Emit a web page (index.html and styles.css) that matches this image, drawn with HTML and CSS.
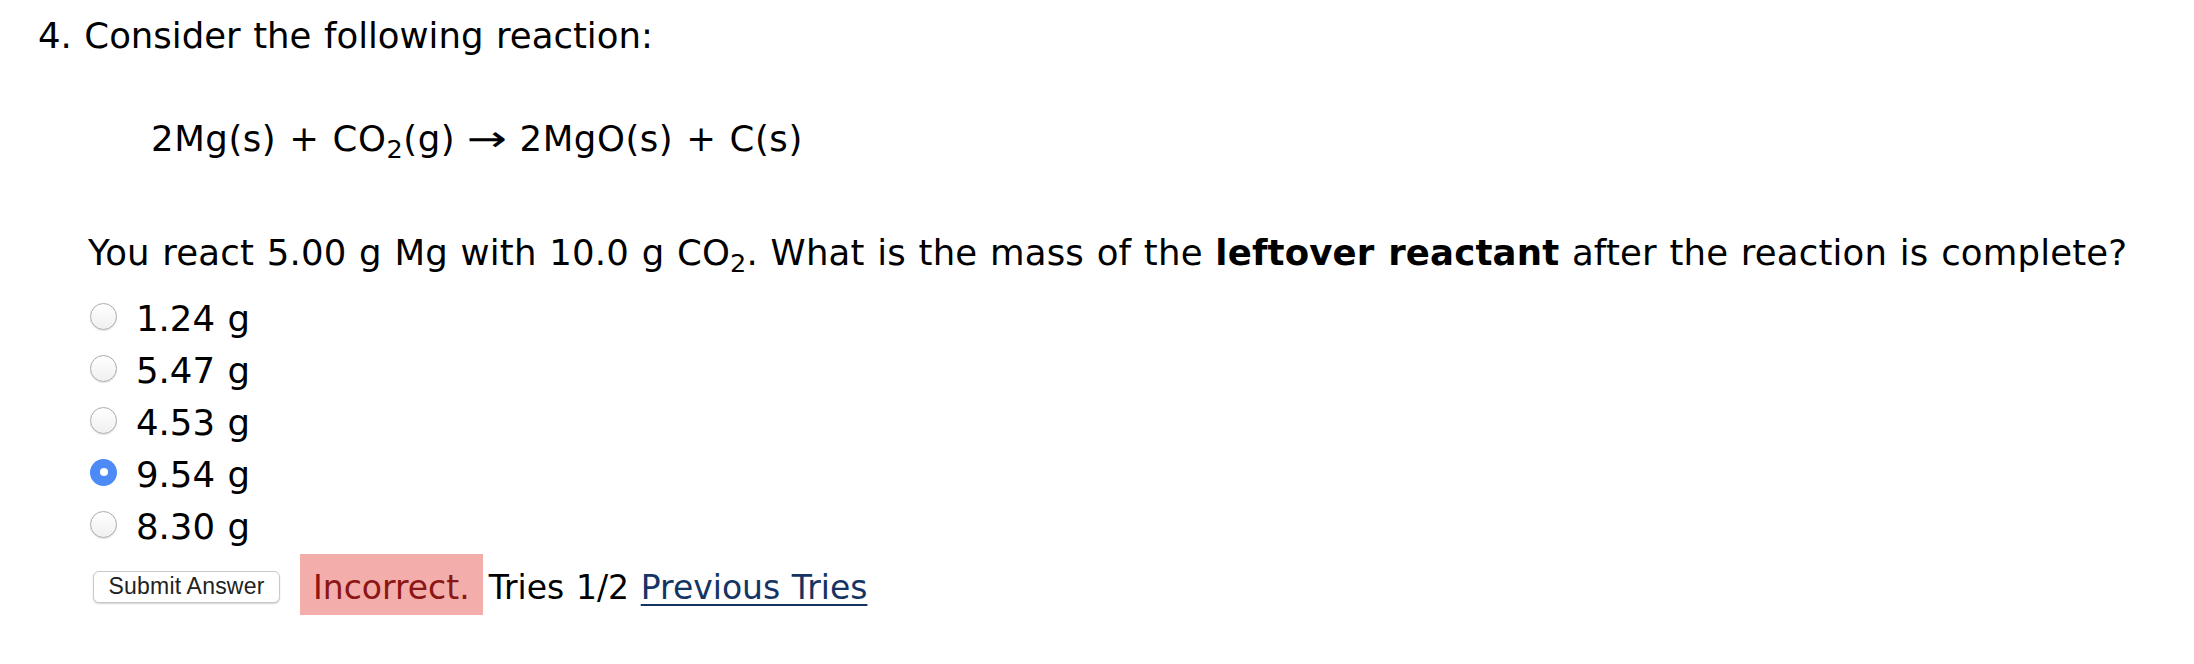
FILE: index.html
```html
<!DOCTYPE html>
<html>
<head>
<meta charset="utf-8">
<link rel="stylesheet" href="styles.css">
</head>
<body>
<div class="q">
  <div class="line title">4. Consider the following reaction:</div>
  <div class="line eq">2Mg(s) + CO<sub>2</sub>(g) <span class="arrow">→</span> 2MgO(s) + C(s)</div>
  <div class="line prompt">You react 5.00 g Mg with 10.0 g CO<sub>2</sub>. What is the mass of the <b>leftover reactant</b> after the reaction is complete?</div>
  <div class="options">
    <label class="opt"><span class="radio"></span><span>1.24 g</span></label>
    <label class="opt"><span class="radio"></span><span>5.47 g</span></label>
    <label class="opt"><span class="radio"></span><span>4.53 g</span></label>
    <label class="opt"><span class="radio checked"></span><span>9.54 g</span></label>
    <label class="opt"><span class="radio"></span><span>8.30 g</span></label>
  </div>
  <div class="submit-row">
    <button class="btn">Submit Answer</button>
    <span class="incorrect">Incorrect.</span>
    <span class="tries">Tries 1/2 <a href="#" class="prev">Previous Tries</a></span>
  </div>
</div>
</body>
</html>
```
FILE: styles.css
```css
html, body {
  margin: 0;
  padding: 0;
  background: #ffffff;
}
body {
  font-family: "DejaVu Sans", Verdana, sans-serif;
  font-size: 35.5px;
  color: #000;
  word-spacing: 1.2px;
}
.q {
  padding: 10px 0 0 38px;
}
.line {
  line-height: 52px;
  white-space: nowrap;
}
sub {
  font-size: 0.72em;
  line-height: 0;
  vertical-align: -0.28em;
}
.eq {
  margin: 51px 0 0 113px;
  letter-spacing: 0.55px;
}
.arrow {
  display: inline-block;
  transform: scaleX(1.35);
  margin: 0 4px;
}
.prompt {
  margin: 62px 0 0 50px;
  letter-spacing: 0.17px;
}
.prompt b {
  font-weight: bold;
}
.options {
  margin: 14px 0 0 52px;
}
.opt {
  display: flex;
  align-items: center;
  height: 52px;
  line-height: 52px;
}
.radio {
  box-sizing: border-box;
  width: 27px;
  height: 27px;
  border-radius: 50%;
  border: 1.5px solid #ababab;
  background: linear-gradient(#ffffff, #f0f0f0);
  box-shadow: 0 1px 1px rgba(0,0,0,0.12);
  margin-right: 19px;
  margin-top: -6px;
  flex: none;
  position: relative;
}
.radio.checked {
  border: none;
  background: #4c8bf5;
  box-shadow: none;
}
.radio.checked::after {
  content: "";
  position: absolute;
  left: 9.5px;
  top: 9.5px;
  width: 8px;
  height: 8px;
  border-radius: 50%;
  background: #fff;
}
.submit-row {
  display: flex;
  align-items: center;
  margin: 1px 0 0 55px;
  white-space: nowrap;
  font-size: 33px;
}
.btn {
  box-sizing: border-box;
  width: 187px;
  height: 32px;
  padding: 0;
  margin: 4px 20px 0 0;
  font-family: "Liberation Sans", Arial, sans-serif;
  font-size: 23px;
  letter-spacing: 0.2px;
  word-spacing: 0;
  color: #222;
  background: #fff;
  border: 1px solid #c9c9c9;
  border-radius: 6px;
  box-shadow: 0 1px 1.5px rgba(0,0,0,0.18);
}
.incorrect {
  display: inline-flex;
  align-items: center;
  height: 61px;
  padding: 6px 13px 0 13px;
  box-sizing: border-box;
  background: #f3adab;
  color: #8c1515;
}
.tries {
  margin-left: 6px;
  padding-top: 6px;
}
.prev {
  color: #143464;
  text-decoration: underline;
  text-decoration-thickness: 2px;
  text-underline-offset: 5px;
}
```
